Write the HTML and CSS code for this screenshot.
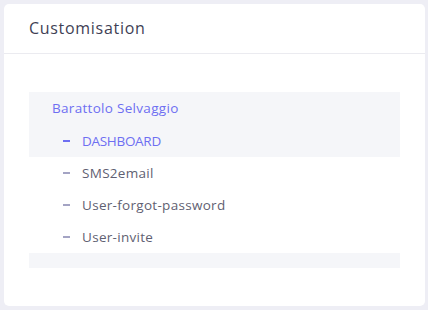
FILE: index.html
```html
<!DOCTYPE html>
<html>
<head>
<meta charset="utf-8">
<link rel="stylesheet" href="styles.css">
</head>
<body>
<div class="card">
  <div class="card-header">Customisation</div>
  <div class="card-body">
    <div class="tree">
      <div class="root">Barattolo Selvaggio</div>
      <ul class="items">
        <li class="item active"><span class="dash"></span><span class="caps">DASHBOARD</span></li>
        <li class="item"><span class="dash"></span><span>SMS2email</span></li>
        <li class="item"><span class="dash"></span><span>User-forgot-password</span></li>
        <li class="item"><span class="dash"></span><span>User-invite</span></li>
      </ul>
      <div class="tree-footer"></div>
    </div>
  </div>
</div>
</body>
</html>
```
FILE: styles.css
```css
html, body {
  margin: 0;
  padding: 0;
}
body {
  background: #eeeef5;
  font-family: "Open Sans", "DejaVu Sans", sans-serif;
  width: 428px;
  height: 310px;
  padding: 4px 3px 4px 4px;
  box-sizing: border-box;
}
.card {
  background: #ffffff;
  border-radius: 5px;
  height: 302px;
  box-sizing: border-box;
}
.card-header {
  height: 49px;
  border-bottom: 1px solid #ebebf0;
  padding-left: 25px;
  font-size: 16px;
  color: #3f3f55;
  line-height: 48px;
  letter-spacing: 0.7px;
}
.card-body {
  padding: 38px 24px 0 25px;
}
.tree {
  width: 371px;
}
.root {
  background: #f5f6f9;
  height: 33px;
  line-height: 32px;
  padding-left: 23px;
  font-size: 13.5px;
  letter-spacing: 0.3px;
  color: #6e6ff2;
}
.items {
  list-style: none;
  margin: 0;
  padding: 0;
}
.item {
  display: flex;
  align-items: center;
  height: 32px;
  padding-left: 34px;
  font-size: 13.5px;
  letter-spacing: 0.3px;
  color: #5f5f72;
}
.item.active {
  background: #f5f6f9;
  color: #6e6ff2;
}
.caps {
  letter-spacing: -0.3px;
}
.dash {
  width: 7px;
  height: 2px;
  background: #a4a4c4;
  margin-right: 12px;
  flex: none;
}
.item.active .dash {
  background: #6e6ff2;
}
.tree-footer {
  background: #f5f6f9;
  height: 15px;
}
```
